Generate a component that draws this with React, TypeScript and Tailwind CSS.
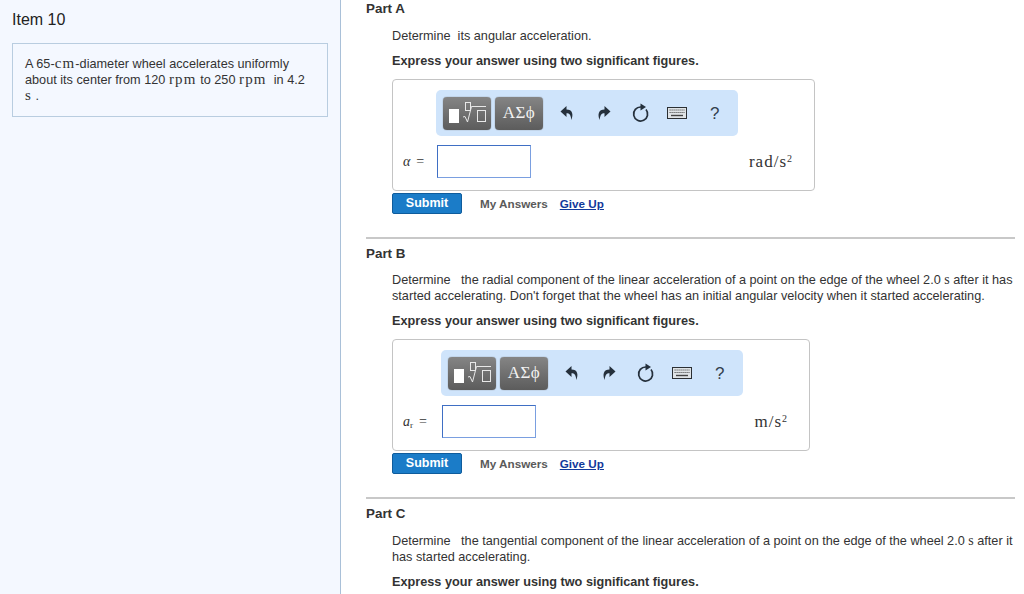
import React from "react";

const sans = "font-['Liberation_Sans',Arial,sans-serif]";
const serif = "font-['Liberation_Serif','DejaVu_Serif',serif]";

function M({ children }: { children: React.ReactNode }) {
  return <span className={`${serif} text-[15px] leading-[0] tracking-[1.2px]`}>{children}</span>;
}

function Toolbar() {
  return (
    <div className="flex h-[46px] w-[302px] items-center rounded-[5px] bg-[#cfe4fb] pl-[7px]">
      <div className="flex h-[33px] w-[48px] items-center justify-center rounded-[4px] bg-gradient-to-b from-[#858585] to-[#5c5c5c] shadow-[0_0_1px_#555]">
        <svg width="48" height="33" viewBox="0 0 48 33" fill="none">
          <rect x="6" y="12" width="10" height="14" fill="#fff" />
          <rect x="22.5" y="5.5" width="5" height="8" stroke="#e8e8e8" strokeWidth="1" />
          <path d="M20 20l2-.5 2.5 5.5 4-15.5H43" stroke="#e8e8e8" strokeWidth="1" />
          <rect x="34.5" y="13.5" width="8" height="11" stroke="#e8e8e8" strokeWidth="1" />
        </svg>
      </div>
      <div className={`ml-[4px] flex h-[33px] w-[48px] items-center justify-center rounded-[4px] bg-gradient-to-b from-[#858585] to-[#5c5c5c] text-[17px] tracking-[0.5px] text-[#f2f2f2] shadow-[0_0_1px_#555] ${serif}`}>
        ΑΣϕ
      </div>
      <svg className="ml-[17px]" width="14" height="16" viewBox="0 0 14 16">
        <path d="M6.5 1L0.5 6.5L6.5 12V8.2C9.5 8.2 11 10 11.3 15C13.6 9.5 12.5 4.6 6.5 4.6Z" fill="#25303c" />
      </svg>
      <svg className="ml-[23px]" width="14" height="16" viewBox="0 0 14 16">
        <path d="M7.5 1L13.5 6.5L7.5 12V8.2C4.5 8.2 3 10 2.7 15C0.4 9.5 1.5 4.6 7.5 4.6Z" fill="#25303c" />
      </svg>
      <svg className="ml-[21px]" width="18" height="20" viewBox="0 0 18 20" fill="none">
        <path d="M14 6.5A7 7 0 1 1 9 4" stroke="#25303c" strokeWidth="1.7" />
        <path d="M8.5 0.5L14 4L8.5 7.5Z" fill="#25303c" />
      </svg>
      <svg className="ml-[17px]" width="20" height="12" viewBox="0 0 20 12" fill="none">
        <rect x="0.5" y="0.5" width="19" height="11" fill="#dfe3e6" stroke="#2b2f33" />
        <path d="M2.5 3h15M2.5 5.5h15" stroke="#555" strokeWidth="1.2" strokeDasharray="1.2 0.8" />
        <path d="M4 8.5h12" stroke="#444" strokeWidth="1.4" />
      </svg>
      <span className={`ml-[23px] text-[17px] leading-none text-[#33404d] ${sans}`}>?</span>
    </div>
  );
}

function AnswerBox({ width, label, unit, indent }: { width: string; label: React.ReactNode; unit: string; indent: string }) {
  return (
    <div className={`${width} h-[112px] rounded-[4px] border border-[#c4c4c4] bg-white pt-[10px]`}>
      <div className={indent}>
        <Toolbar />
      </div>
      <div className="mt-[9px] flex h-[33px] items-center">
        {label}
        <div className="h-[33px] w-[94px] shrink-0 border border-[#3f6fc4] border-r-[#7a9fe0] border-b-[#7a9fe0] bg-white" />
        <span className={`ml-auto mr-[21px] text-[17px] tracking-[1px] text-[#333] ${serif}`}>
          {unit}/s<sup className="text-[10px]">2</sup>
        </span>
      </div>
    </div>
  );
}

function Actions() {
  return (
    <div className="mt-[2px] flex h-[21px] items-center">
      <button className="h-[21px] w-[70px] rounded-[2px] border border-[#0f5c9c] bg-[#1b7cc8] text-[12.5px] font-bold text-white">
        Submit
      </button>
      <span className="ml-[18px] text-[11.7px] font-bold text-[#5a5a5a]">My Answers</span>
      <span className="ml-[12px] text-[11.7px] font-bold text-[#11399b] underline">Give Up</span>
    </div>
  );
}

export default function App() {
  return (
    <div className={`flex h-[594px] w-[1024px] overflow-hidden bg-white text-[12.7px] text-[#333] ${sans}`}>
      <aside className="h-full w-[341px] shrink-0 border-r border-[#a9c0d8] bg-[#f4f8ff] px-[12px] pt-[11px]">
        <h1 className="text-[16px] leading-[18px] text-[#222]">Item 10</h1>
        <div className="mt-[14px] h-[74px] w-[316px] border border-[#b9cde0] px-[12px] pt-[12px] leading-[16px] text-[#333]">
          A 65-<M>cm</M>-diameter wheel accelerates uniformly about its center from 120 <M>rpm</M> to 250 <M>rpm</M>&nbsp; in 4.2 <span className="whitespace-nowrap"><M>s</M> .</span>
        </div>
      </aside>
      <main className="flex-1 pl-[25px] pr-[9px] pt-[1px]">
        <h2 className="text-[13.4px] font-bold leading-[16px]">Part A</h2>
        <div className="pl-[26px]">
          <p className="mt-[11px] leading-[16px]">Determine&nbsp; its angular acceleration.</p>
          <p className="mt-[9px] font-bold leading-[16px]">Express your answer using two significant figures.</p>
          <div className="mt-[10px]">
            <AnswerBox
              width="w-[423px]"
              indent="ml-[43px]"
              unit="rad"
              label={<span className={`w-[44px] shrink-0 whitespace-nowrap pl-[10px] text-[14px] ${serif}`}><i>α</i><span className="ml-[6px]">=</span></span>}
            />
          </div>
          <Actions />
        </div>
        <hr className="mt-[23px] border-t-2 border-[#c8c8c8]" />
        <h2 className="mt-[7px] text-[13.4px] font-bold leading-[16px]">Part B</h2>
        <div className="pl-[26px]">
          <p className="mt-[10px] leading-[16px]">
            Determine&nbsp;&nbsp; the radial component of the linear acceleration of a point on the edge of the wheel 2.0 <span className={`${serif} text-[14px] leading-[0]`}>s</span> after it has started accelerating. Don't forget that the wheel has an initial angular velocity when it started accelerating.
          </p>
          <p className="mt-[9px] font-bold leading-[16px]">Express your answer using two significant figures.</p>
          <div className="mt-[10px]">
            <AnswerBox
              width="w-[418px]"
              indent="ml-[48px]"
              unit="m"
              label={<span className={`w-[49px] shrink-0 whitespace-nowrap pl-[10px] text-[14px] ${serif}`}><i>a</i><sub className="text-[9px]">r</sub><span className="ml-[6px]">=</span></span>}
            />
          </div>
          <Actions />
        </div>
        <hr className="mt-[23px] border-t-2 border-[#c8c8c8]" />
        <h2 className="mt-[7px] text-[13.4px] font-bold leading-[16px]">Part C</h2>
        <div className="pl-[26px]">
          <p className="mt-[11px] leading-[16px]">
            Determine&nbsp;&nbsp; the tangential component of the linear acceleration of a point on the edge of the wheel 2.0 <span className={`${serif} text-[14px] leading-[0]`}>s</span> after it has started accelerating.
          </p>
          <p className="mt-[9px] font-bold leading-[16px]">Express your answer using two significant figures.</p>
        </div>
      </main>
    </div>
  );
}
